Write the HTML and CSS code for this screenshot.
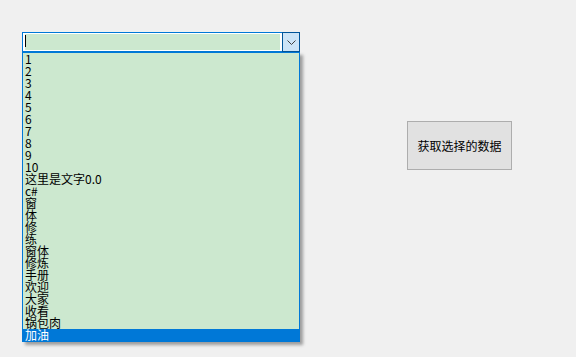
FILE: index.html
```html
<!DOCTYPE html>
<html>
<head>
<meta charset="utf-8">
<link rel="stylesheet" href="styles.css">
</head>
<body>
<div class="page">
  <div class="combo-wrap">
    <div class="combo">
      <div class="combo-edit"><span class="caret"></span></div>
      <div class="combo-btn">
        <svg width="9" height="5" viewBox="0 0 9 5"><path d="M0.5 0.5 L4.5 4.5 L8.5 0.5" fill="none" stroke="#404040" stroke-width="1"/></svg>
      </div>
    </div>
    <ul class="dropdown">
      <li>1</li>
      <li>2</li>
      <li>3</li>
      <li>4</li>
      <li>5</li>
      <li>6</li>
      <li>7</li>
      <li>8</li>
      <li>9</li>
      <li>10</li>
      <li>这里是文字0.0</li>
      <li>c#</li>
      <li>窗</li>
      <li>体</li>
      <li>修</li>
      <li>练</li>
      <li>窗体</li>
      <li>修炼</li>
      <li>手册</li>
      <li>欢迎</li>
      <li>大家</li>
      <li>收看</li>
      <li>锅包肉</li>
      <li class="selected">加油</li>
    </ul>
  </div>
  <button class="fetch-btn">获取选择的数据</button>
</div>
</body>
</html>
```
FILE: styles.css
```css
html, body {
  margin: 0;
  padding: 0;
  background: #f0f0f0;
  width: 576px;
  height: 357px;
  overflow: hidden;
  font-family: "Noto Sans CJK SC", "DejaVu Sans", sans-serif;
  font-size: 12px;
  color: #000;
}

.page {
  display: flex;
  align-items: flex-start;
  padding: 32px 0 0 22px;
}

.combo-wrap {
  position: relative;
  width: 278px;
}

.combo {
  display: flex;
  height: 20px;
  box-sizing: border-box;
  border: 1px solid #0078d7;
  background: #fff;
}

.combo-edit {
  flex: 1;
  margin: 1px 2px 1px 2px;
  background: #cce8cf;
  position: relative;
}

.caret {
  position: absolute;
  left: 0;
  top: 1px;
  width: 1px;
  height: 12px;
  background: #000;
}

.combo-btn {
  width: 16px;
  margin: -1px -1px -1px 0;
  border: 1px solid #005499;
  background: #cce4f7;
  display: flex;
  align-items: center;
  justify-content: center;
}

.dropdown {
  position: absolute;
  left: 0;
  top: 20px;
  width: 278px;
  box-sizing: border-box;
  margin: 0;
  padding: 0;
  list-style: none;
  background: #cce8cf;
  border: 1px solid #0078d7;
  box-shadow: 3px 3px 3px rgba(0, 0, 0, 0.35);
}

.dropdown li {
  height: 12px;
  line-height: 12px;
  padding-left: 2px;
  white-space: nowrap;
}

.dropdown li.selected {
  background: #0078d7;
  color: #fff;
}

.fetch-btn {
  margin: 89px 0 0 107px;
  width: 105px;
  height: 49px;
  box-sizing: border-box;
  border: 1px solid #adadad;
  background: #e1e1e1;
  font-family: "Noto Sans CJK SC", sans-serif;
  font-size: 12px;
  color: #000;
  padding: 0;
}
```
